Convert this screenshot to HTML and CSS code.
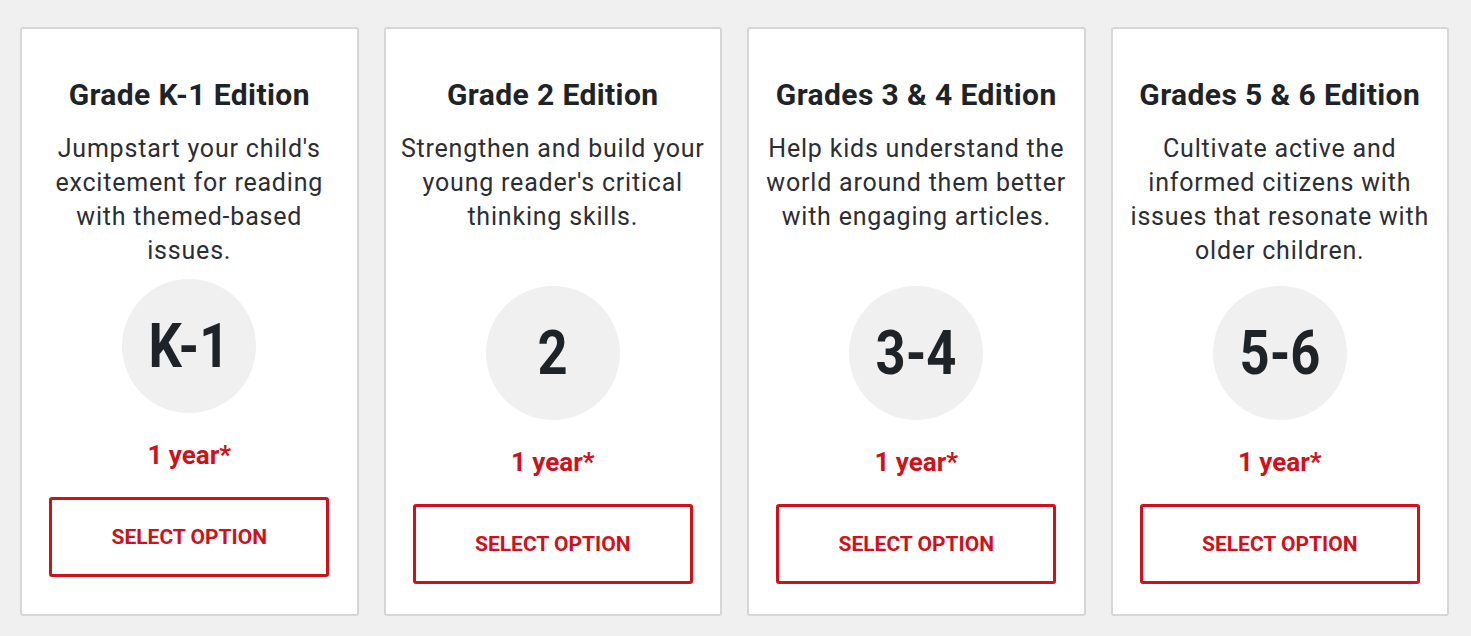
FILE: index.html
```html
<!DOCTYPE html>
<html lang="en">
<head>
    <meta charset="UTF-8">
    <meta name="viewport" content="width=device-width, initial-scale=1.0">
    <title>Choose an Edition</title>
    <link rel="stylesheet" href="styles.css">
</head>
<body>
    <div class="editions">
        <div class="edition-card edition-card--first">
            <h2 class="edition-title">Grade K-1 Edition</h2>
            <p class="edition-text">Jumpstart your child's excitement for reading with themed-based issues.</p>
            <div class="edition-bottom">
                <div class="grade-circle"><span class="grade-label">K-1</span></div>
                <div class="edition-term">1 year*</div>
                <button class="select-button">Select Option</button>
            </div>
        </div>

        <div class="edition-card">
            <h2 class="edition-title">Grade 2 Edition</h2>
            <p class="edition-text">Strengthen and build your young reader's critical thinking skills.</p>
            <div class="edition-bottom">
                <div class="grade-circle"><span class="grade-label">2</span></div>
                <div class="edition-term">1 year*</div>
                <button class="select-button">Select Option</button>
            </div>
        </div>

        <div class="edition-card">
            <h2 class="edition-title">Grades 3 &amp; 4 Edition</h2>
            <p class="edition-text">Help kids understand the world around them better with engaging articles.</p>
            <div class="edition-bottom">
                <div class="grade-circle"><span class="grade-label">3-4</span></div>
                <div class="edition-term">1 year*</div>
                <button class="select-button">Select Option</button>
            </div>
        </div>

        <div class="edition-card">
            <h2 class="edition-title">Grades 5 &amp; 6 Edition</h2>
            <p class="edition-text">Cultivate active and informed citizens with issues that resonate with older children.</p>
            <div class="edition-bottom">
                <div class="grade-circle"><span class="grade-label">5-6</span></div>
                <div class="edition-term">1 year*</div>
                <button class="select-button">Select Option</button>
            </div>
        </div>
    </div>
</body>
</html>
```

FILE: styles.css
```css
:root {
    --page-bg: #f0f0f0;
    --card-border: #d6d6d6;
    --heading-color: #1e2328;
    --text-color: #2b2e33;
    --accent-red: #d0111b;
    --circle-bg: #f0f0f1;
}

* {
    margin: 0;
    padding: 0;
    box-sizing: border-box;
    font-family: Roboto, 'Liberation Sans', sans-serif;
}

body {
    background-color: var(--page-bg);
    padding: 27px 22px 0 20px;
}

.editions {
    display: grid;
    grid-template-columns: repeat(4, 1fr);
    gap: 25px;
}

.edition-card {
    background-color: #ffffff;
    border: 2px solid var(--card-border);
    border-radius: 3px;
    height: 589px;
    padding: 49px 10px 30px;
    display: flex;
    flex-direction: column;
    align-items: center;
    text-align: center;
}

.edition-card--first {
    padding-bottom: 37px;
}

.edition-title {
    font-size: 30px;
    line-height: 34px;
    font-weight: 700;
    letter-spacing: 0.4px;
    color: var(--heading-color);
}

.edition-text {
    margin-top: 20px;
    font-size: 25px;
    line-height: 34px;
    letter-spacing: 0.8px;
    color: var(--text-color);
}

.edition-bottom {
    margin-top: auto;
    display: flex;
    flex-direction: column;
    align-items: center;
}

.grade-circle {
    width: 134px;
    height: 134px;
    border-radius: 50%;
    background-color: var(--circle-bg);
    display: flex;
    justify-content: center;
    align-items: center;
}

/* the digits are set narrow, like a condensed cut */
.grade-label {
    display: inline-block;
    font-size: 61px;
    font-weight: 700;
    color: var(--heading-color);
    transform: scaleX(0.86);
}

.edition-term {
    margin-top: 25px;
    font-size: 26px;
    line-height: 34px;
    font-weight: 700;
    color: var(--accent-red);
}

.select-button {
    margin-top: 25px;
    width: 280px;
    height: 80px;
    background-color: #ffffff;
    border: 3px solid var(--accent-red);
    border-radius: 3px;
    color: var(--accent-red);
    font-size: 21px;
    font-weight: 700;
    text-transform: uppercase;
    cursor: pointer;
}
```
